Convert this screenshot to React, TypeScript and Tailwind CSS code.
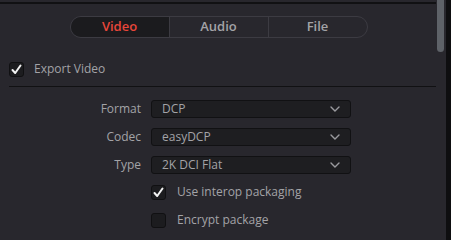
import type { FC } from "react";

const Check: FC<{ checked?: boolean }> = ({ checked }) => (
  <span className="w-[15px] h-[15px] rounded-[3px] bg-[#1c1c1f] border border-[#101012] flex items-center justify-center shrink-0">
    {checked && (
      <svg width="11" height="11" viewBox="0 0 11 11" fill="none">
        <path d="M1.5 6 L4.2 9 L9.5 1.5" stroke="#f2f2f2" strokeWidth="2" strokeLinecap="round" strokeLinejoin="round" />
      </svg>
    )}
  </span>
);

const Chevron: FC = () => (
  <svg width="10" height="6" viewBox="0 0 10 6" fill="none">
    <path d="M1 1 L5 5 L9 1" stroke="#9a9a9e" strokeWidth="1.4" strokeLinecap="round" />
  </svg>
);

const rows = [
  { label: "Format", value: "DCP" },
  { label: "Codec", value: "easyDCP" },
  { label: "Type", value: "2K DCI Flat" },
];

const tabs = ["Video", "Audio", "File"];

export default function App() {
  return (
    <div
      className="w-[451px] h-[240px] bg-[#28272d] flex overflow-hidden text-[#a3a3a7]"
      style={{ fontFamily: '"Open Sans", sans-serif' }}
    >
      <div className="flex-1 flex flex-col">
        <div className="h-[2px] mt-[2px] mr-[1px] bg-[#111113]" />
        <div className="flex justify-center mt-[12px]">
          <div className="flex w-[298px] h-[22px] rounded-full border border-[#3c3b42] overflow-hidden text-[13px] font-semibold">
            {tabs.map((t, i) => (
              <div
                key={t}
                className={`flex-1 flex items-center justify-center ${i > 0 ? "border-l border-[#3c3b42]" : ""} ${i === 0 ? "bg-[#1b1b1e] text-[#e8463a]" : "text-[#a3a3a7]"}`}
              >
                {t}
              </div>
            ))}
          </div>
        </div>
        <div className="flex items-center gap-[10px] ml-[9px] mt-[22px] text-[12px]">
          <Check checked />
          <span>Export Video</span>
        </div>
        <div className="h-px bg-[#111113] ml-[9px] mr-[1px] mt-[8px]" />
        <div className="flex flex-col gap-[10px] mt-[13px]">
          {rows.map((r) => (
            <div key={r.label} className="flex items-center text-[12px]">
              <span className="w-[141px] text-right">{r.label}</span>
              <div className="ml-[10px] w-[200px] h-[18px] rounded-[3px] bg-[#1e1e21] border border-[#111113] flex items-center justify-between pl-[10px] pr-[10px]">
                <span>{r.value}</span>
                <Chevron />
              </div>
            </div>
          ))}
        </div>
        <div className="flex flex-col gap-[10px] ml-[151px] mt-[9px] text-[12px]">
          <div className="flex items-center gap-[11px]">
            <Check checked />
            <span>Use interop packaging</span>
          </div>
          <div className="flex items-center gap-[11px]">
            <Check />
            <span>Encrypt package</span>
          </div>
        </div>
      </div>
      <div className="w-[14px] flex">
        <div className="w-[8px] flex flex-col">
          <div className="h-[52px] w-[7px] bg-[#5e6268] rounded-b-[4px]" />
        </div>
        <div className="ml-[1px] flex-1 bg-[#0e0e10]" />
      </div>
    </div>
  );
}
